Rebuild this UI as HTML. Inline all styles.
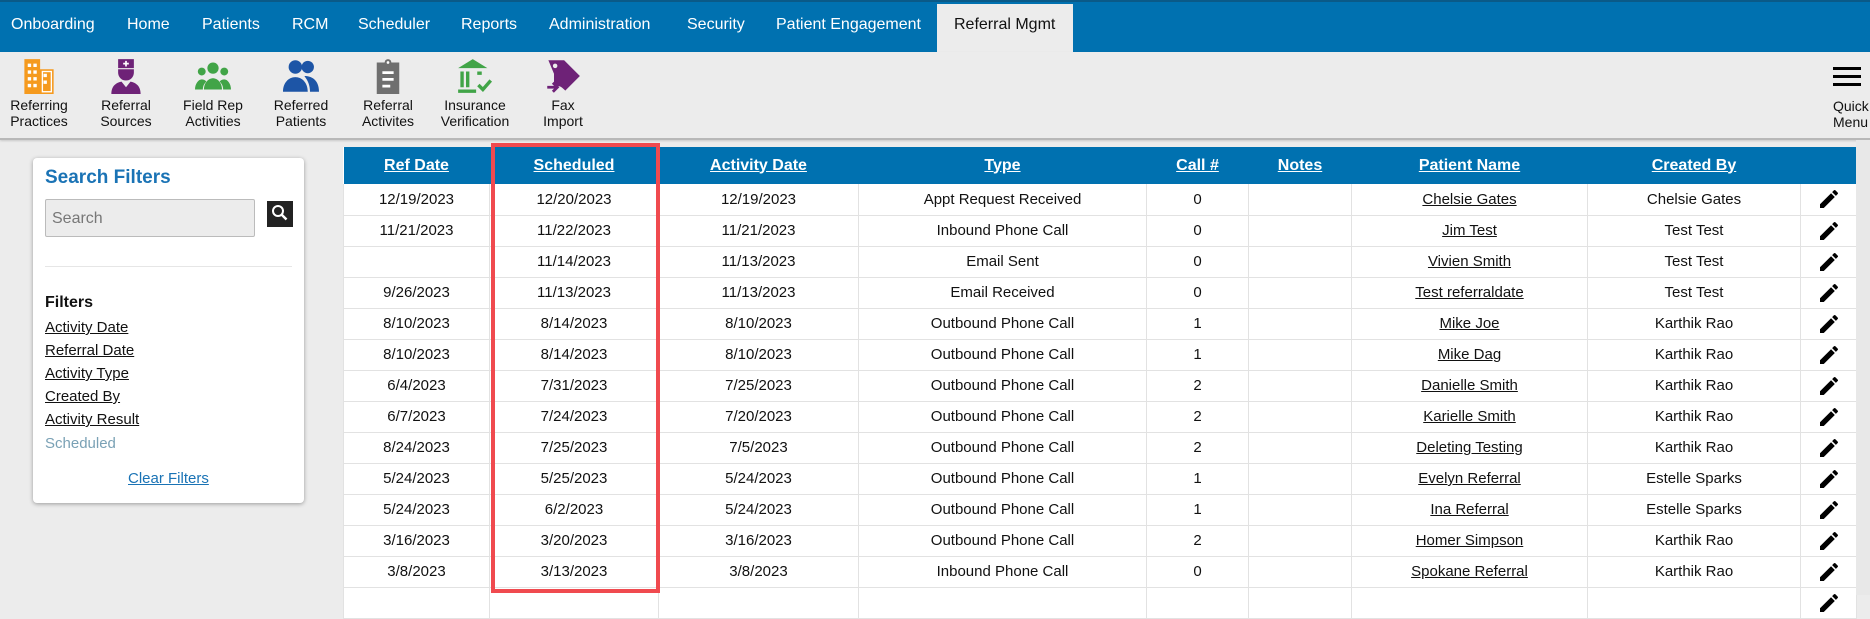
<!DOCTYPE html>
<html><head><meta charset="utf-8"><style>
*{box-sizing:border-box;margin:0;padding:0}
body{width:1870px;height:595px;overflow:hidden;background:#ececec;font-family:"Liberation Sans",Arial,sans-serif;position:relative;color:#111}
.nav{position:absolute;left:0;top:0;width:1870px;height:52px;background:#0071b0;border-top:2px solid #0a5a88}
.nav span{position:absolute;top:14px;color:#fff;font-size:16px}
.tab{position:absolute;left:937px;top:2px;width:136px;height:50px;background:#ececec}
.tb{position:absolute;top:52px;left:0;width:1870px;height:88px;background:#ececec;border-bottom:2px solid #b8b8b8;box-shadow:0 1px 2px rgba(0,0,0,.15)}
.ti{position:absolute;top:6px;width:90px;text-align:center;font-size:14px;line-height:16px;color:#111}
.ti svg{display:block;margin:0 auto 3px;width:40px;height:36px}
.panel{position:absolute;left:33px;top:158px;width:271px;height:345px;background:#fff;border-radius:4px;box-shadow:0 1px 4px rgba(0,0,0,.35)}
.panel .t{position:absolute;left:12px;top:9px;font-size:19px;font-weight:bold;color:#1a73b5}
.inp{position:absolute;left:12px;top:41px;width:210px;height:38px;background:#ececec;border:1px solid #bbb;border-radius:2px;font-size:16px;color:#777;padding:10px 6px}
.sbtn{position:absolute;left:234px;top:43px;width:26px;height:26px;background:#222}
.hr{position:absolute;left:12px;right:12px;top:108px;border-top:1px solid #e6e6e6}
.fl{position:absolute;left:12px;font-size:15px;text-decoration:underline;color:#111}
table{position:absolute;left:343px;top:147px;border-collapse:collapse;table-layout:fixed;width:1513px;background:#fff;font-size:15px}
th{background:#0071b0;color:#fff;height:37px;font-size:16px;text-decoration:underline;font-weight:bold}
td{height:31px;text-align:center;border:1px solid #e2e2e2;border-top:none;padding:0}
td.u{text-decoration:underline}
td svg{display:inline-block;vertical-align:middle;width:24px;height:24px}
.red{position:absolute;left:491px;top:143px;width:169px;height:450px;border:4px solid #f04a4f}
.sb{position:absolute;left:1856px;top:140px;width:14px;height:455px;background:#e8e8e8}
</style></head><body>
<svg width="0" height="0" style="position:absolute"><defs><symbol id="pen" viewBox="0 0 24 24"><path d="M3 17.25V21h3.75L17.81 9.94l-3.75-3.75L3 17.25zM20.71 7.04a1 1 0 0 0 0-1.41l-2.34-2.34a1 1 0 0 0-1.41 0l-1.83 1.83 3.750 3.75 1.83-1.83z"/></symbol></defs></svg>
<div class="nav">
<div class="tab"></div>
<span style="left:11px">Onboarding</span><span style="left:127px">Home</span><span style="left:202px">Patients</span><span style="left:292px">RCM</span><span style="left:358px">Scheduler</span><span style="left:461px">Reports</span><span style="left:549px">Administration</span><span style="left:687px">Security</span><span style="left:776px">Patient Engagement</span><span style="left:954px;color:#111">Referral Mgmt</span>
</div>
<div class="tb">
<div class="ti" style="left:-6px"><svg viewBox="0 0 34 32"><path fill="#f59a1e" d="M4 1h14v31H4zM18 10h12v22H18z"/><g fill="#fff"><rect x="7" y="5" width="3" height="3"/><rect x="12" y="5" width="3" height="3"/><rect x="7" y="11" width="3" height="3"/><rect x="12" y="11" width="3" height="3"/><rect x="7" y="17" width="3" height="3"/><rect x="12" y="17" width="3" height="3"/><rect x="7" y="23" width="3" height="3"/><rect x="12" y="23" width="3" height="3"/><rect x="21" y="14" width="3" height="3"/><rect x="21" y="20" width="3" height="3"/><rect x="20" y="12" width="8" height="18" fill="none" stroke="#fff" stroke-width="1.2"/></g></svg>Referring<br>Practices</div>
<div class="ti" style="left:81px"><svg viewBox="0 0 34 32"><path fill="#6e2277" d="M10 1h14v8H10zM10 10h14v3a7 7 0 0 1-14 0zM4 32c0-7 4-10 9-11l4 5 4-5c5 1 9 4 9 11z"/><path stroke="#fff" stroke-width="1.5" d="M17 2.5v5M14.5 5h5"/></svg>Referral<br>Sources</div>
<div class="ti" style="left:168px"><svg viewBox="0 0 34 32"><g fill="#41a447"><circle cx="17" cy="9" r="5"/><circle cx="7" cy="12" r="3.5"/><circle cx="27" cy="12" r="3.5"/><path d="M9 28c0-6 4-10 8-10s8 4 8 10zM1 28c0-5 3-9 6-9s4 2 4 2c-2 2-3 4-3 7zM33 28c0-5-3-9-6-9s-4 2-4 2c2 2 3 4 3 7z"/></g></svg>Field Rep<br>Activities</div>
<div class="ti" style="left:256px"><svg viewBox="0 0 34 32"><g fill="#1d55a6"><circle cx="12" cy="8" r="6"/><circle cx="23" cy="8" r="5.5"/><path d="M1 30c0-8 5-13 11-13s11 5 11 13zM20 16c6 0 13 3 13 14h-8c0-6-2-10-5-14z"/></g></svg>Referred<br>Patients</div>
<div class="ti" style="left:343px"><svg viewBox="0 0 34 32"><path fill="#6f6f6f" d="M7 4h20v28H7z"/><circle cx="17" cy="4" r="3" fill="#6f6f6f"/><path stroke="#fff" stroke-width="2.5" d="M12 13h10M12 19h10M12 25h7"/><circle cx="17" cy="4" r="1.2" fill="#fff"/></svg>Referral<br>Activites</div>
<div class="ti" style="left:430px"><svg viewBox="0 0 34 32"><path fill="#41a447" d="M2 9L15 1l13 8zM4 12h3v14H4zM9 12h3v14H9zM2 28h16v3H2zM19 12h4v3h-4z"/><path fill="none" stroke="#41a447" stroke-width="3" d="M20 24l4 4 7-8"/></svg>Insurance<br>Verification</div>
<div class="ti" style="left:518px"><svg viewBox="0 0 34 32"><path fill="#6e2277" d="M4 2h14l14 14-13 13c-2-2-4-4-6-4s-4 2-4 4V14z"/><circle cx="10" cy="7" r="2" fill="#ececec"/><path stroke="#6e2277" stroke-width="2.5" fill="none" d="M3 26h8M8 22l4 4-4 4"/></svg>Fax<br>Import</div>
<div style="position:absolute;left:1833px;top:15px;width:28px"><div style="height:3px;background:#000;margin-bottom:5px"></div><div style="height:3px;background:#000;margin-bottom:5px"></div><div style="height:3px;background:#000"></div></div>
<div style="position:absolute;left:1833px;top:46px;font-size:14px;line-height:16px">Quick<br>Menu</div>
</div>
<div class="panel">
<div class="t">Search Filters</div>
<div class="inp">Search</div>
<div class="sbtn"><svg width="26" height="26" viewBox="0 0 26 26"><circle cx="11" cy="10" r="5" fill="none" stroke="#fff" stroke-width="2"/><path d="M14.5 13.5l5 5" stroke="#fff" stroke-width="2.5"/></svg></div>
<div class="hr"></div>
<div style="position:absolute;left:12px;top:136px;font-size:16px;font-weight:bold">Filters</div>
<div class="fl" style="top:161px">Activity Date</div>
<div class="fl" style="top:184px">Referral Date</div>
<div class="fl" style="top:207px">Activity Type</div>
<div class="fl" style="top:230px">Created By</div>
<div class="fl" style="top:253px">Activity Result</div>
<div class="fl" style="top:277px;text-decoration:none;color:#7aa1b5">Scheduled</div>
<div class="fl" style="top:312px;left:95px;color:#1a73b5">Clear Filters</div>
</div>
<table>
<colgroup><col style="width:146px"><col style="width:169px"><col style="width:200px"><col style="width:288px"><col style="width:102px"><col style="width:103px"><col style="width:236px"><col style="width:213px"><col style="width:56px"></colgroup>
<tr><th>Ref Date</th><th>Scheduled</th><th>Activity Date</th><th>Type</th><th>Call #</th><th>Notes</th><th>Patient Name</th><th>Created By</th><th></th></tr>
<tr><td>12/19/2023</td><td>12/20/2023</td><td>12/19/2023</td><td>Appt Request Received</td><td>0</td><td></td><td class="u">Chelsie Gates</td><td>Chelsie Gates</td><td><svg><use href="#pen"/></svg></td></tr>
<tr><td>11/21/2023</td><td>11/22/2023</td><td>11/21/2023</td><td>Inbound Phone Call</td><td>0</td><td></td><td class="u">Jim Test</td><td>Test Test</td><td><svg><use href="#pen"/></svg></td></tr>
<tr><td></td><td>11/14/2023</td><td>11/13/2023</td><td>Email Sent</td><td>0</td><td></td><td class="u">Vivien Smith</td><td>Test Test</td><td><svg><use href="#pen"/></svg></td></tr>
<tr><td>9/26/2023</td><td>11/13/2023</td><td>11/13/2023</td><td>Email Received</td><td>0</td><td></td><td class="u">Test referraldate</td><td>Test Test</td><td><svg><use href="#pen"/></svg></td></tr>
<tr><td>8/10/2023</td><td>8/14/2023</td><td>8/10/2023</td><td>Outbound Phone Call</td><td>1</td><td></td><td class="u">Mike Joe</td><td>Karthik Rao</td><td><svg><use href="#pen"/></svg></td></tr>
<tr><td>8/10/2023</td><td>8/14/2023</td><td>8/10/2023</td><td>Outbound Phone Call</td><td>1</td><td></td><td class="u">Mike Dag</td><td>Karthik Rao</td><td><svg><use href="#pen"/></svg></td></tr>
<tr><td>6/4/2023</td><td>7/31/2023</td><td>7/25/2023</td><td>Outbound Phone Call</td><td>2</td><td></td><td class="u">Danielle Smith</td><td>Karthik Rao</td><td><svg><use href="#pen"/></svg></td></tr>
<tr><td>6/7/2023</td><td>7/24/2023</td><td>7/20/2023</td><td>Outbound Phone Call</td><td>2</td><td></td><td class="u">Karielle Smith</td><td>Karthik Rao</td><td><svg><use href="#pen"/></svg></td></tr>
<tr><td>8/24/2023</td><td>7/25/2023</td><td>7/5/2023</td><td>Outbound Phone Call</td><td>2</td><td></td><td class="u">Deleting Testing</td><td>Karthik Rao</td><td><svg><use href="#pen"/></svg></td></tr>
<tr><td>5/24/2023</td><td>5/25/2023</td><td>5/24/2023</td><td>Outbound Phone Call</td><td>1</td><td></td><td class="u">Evelyn Referral</td><td>Estelle Sparks</td><td><svg><use href="#pen"/></svg></td></tr>
<tr><td>5/24/2023</td><td>6/2/2023</td><td>5/24/2023</td><td>Outbound Phone Call</td><td>1</td><td></td><td class="u">Ina Referral</td><td>Estelle Sparks</td><td><svg><use href="#pen"/></svg></td></tr>
<tr><td>3/16/2023</td><td>3/20/2023</td><td>3/16/2023</td><td>Outbound Phone Call</td><td>2</td><td></td><td class="u">Homer Simpson</td><td>Karthik Rao</td><td><svg><use href="#pen"/></svg></td></tr>
<tr><td>3/8/2023</td><td>3/13/2023</td><td>3/8/2023</td><td>Inbound Phone Call</td><td>0</td><td></td><td class="u">Spokane Referral</td><td>Karthik Rao</td><td><svg><use href="#pen"/></svg></td></tr>
<tr><td></td><td></td><td></td><td></td><td></td><td></td><td></td><td></td><td><svg><use href="#pen"/></svg></td></tr>
</table>
<div class="sb"></div>
<div class="red"></div>
</body></html>
